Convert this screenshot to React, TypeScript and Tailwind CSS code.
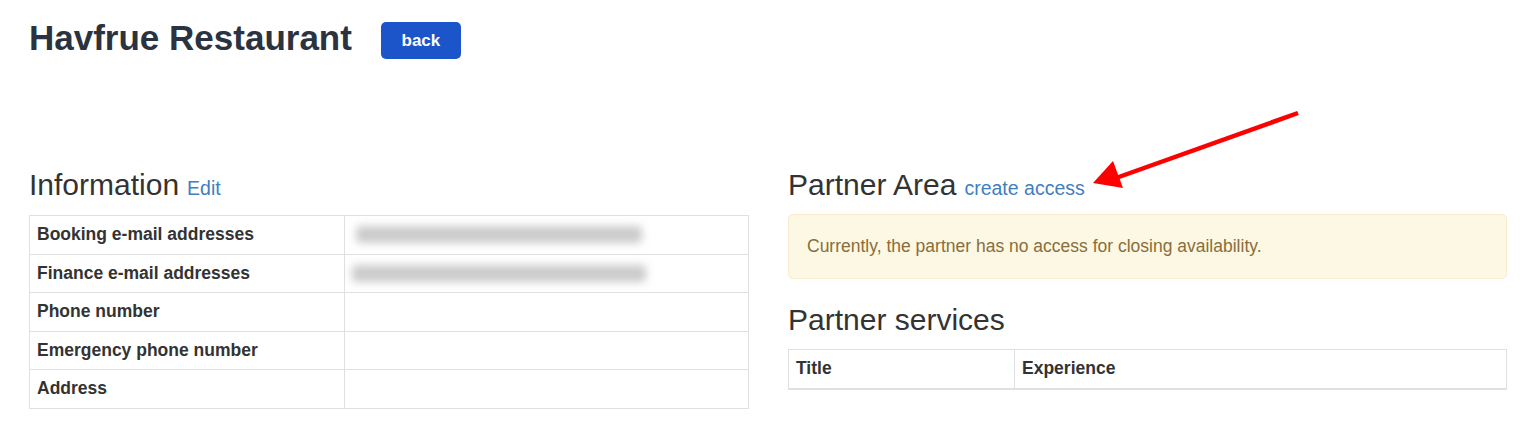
import React from "react";

const infoRows = [
  { label: "Booking e-mail addresses", blur: "w-[286px] ml-[4px]" },
  { label: "Finance e-mail addresses", blur: "w-[294px] ml-0" },
  { label: "Phone number", blur: "" },
  { label: "Emergency phone number", blur: "" },
  { label: "Address", blur: "" },
];

function Blurred({ className }: { className: string }) {
  // redacted value in the screenshot, just a soft gray smear
  return (
    <div className={`h-[17px] rounded-sm bg-[#cbcbcb] blur-[4px] ${className}`} />
  );
}

export default function App() {
  return (
    <div
      className="relative h-[440px] w-[1534px] overflow-hidden bg-white text-[17.5px] leading-[25px] text-[#333333]"
      style={{ fontFamily: '"Liberation Sans", Arial, Helvetica, sans-serif' }}
    >
      <div className="pl-[29px] pr-[27px] pt-[19px]">
        <div className="flex items-start">
          <h1 className="text-[35px] font-bold leading-[38.5px] text-[#2b3340]">
            Havfrue Restaurant
          </h1>
          <button className="ml-[29px] mt-[3px] flex h-[37px] w-[80px] items-center justify-center rounded-[5px] bg-[#1b55c9] text-[17px] font-bold text-white">
            back
          </button>
        </div>

        <div className="mt-[109px] grid grid-cols-[720px_719px] gap-x-[39px]">
          {/* left column */}
          <div>
            <h3 className="h-[33px] text-[30px] leading-[33px]">
              Information
              <a className="ml-[8px] text-[19.5px] leading-none text-[#3f7fc0]">Edit</a>
            </h3>
            <table className="mt-[14px] w-full border border-[#e0e0e0]">
              <tbody>
                {infoRows.map((r) => (
                  <tr key={r.label}>
                    <td className="w-[315px] border border-[#e0e0e0] px-[7px] py-[6.25px] font-bold">
                      {r.label}
                    </td>
                    <td className="border border-[#e0e0e0] px-[7px] py-[6.25px]">
                      {r.blur ? <Blurred className={r.blur} /> : <div className="h-[25px]" />}
                    </td>
                  </tr>
                ))}
              </tbody>
            </table>
          </div>

          {/* right column */}
          <div>
            <h3 className="h-[33px] text-[30px] leading-[33px]">
              Partner Area
              <a className="ml-[8px] text-[19.5px] leading-none text-[#3f7fc0]">create access</a>
            </h3>
            <div className="mt-[13px] rounded-[5px] border border-[#faebcc] bg-[#fcf8e3] px-[18px] py-[19px] text-[#8a6d3b]">
              Currently, the partner has no access for closing availability.
            </div>

            <h3 className="mt-[24px] h-[33px] text-[30px] leading-[33px]">Partner services</h3>
            <table className="mt-[13px] w-full border border-[#e0e0e0]">
              <thead>
                <tr>
                  <th className="w-[226px] border border-b-2 border-[#e0e0e0] px-[7px] py-[6.25px] text-left font-bold">
                    Title
                  </th>
                  <th className="border border-b-2 border-[#e0e0e0] px-[7px] py-[6.25px] text-left font-bold">
                    Experience
                  </th>
                </tr>
              </thead>
            </table>
          </div>
        </div>
      </div>

      {/* annotation arrow drawn over the page */}
      <svg
        className="pointer-events-none absolute left-0 top-0"
        width="1534"
        height="440"
        viewBox="0 0 1534 440"
      >
        <line x1="1298" y1="113" x2="1116" y2="178" stroke="#ff0000" strokeWidth="4.5" strokeLinecap="butt" />
        <polygon points="1093,183 1113,161 1123,188" fill="#ff0000" />
      </svg>
    </div>
  );
}
